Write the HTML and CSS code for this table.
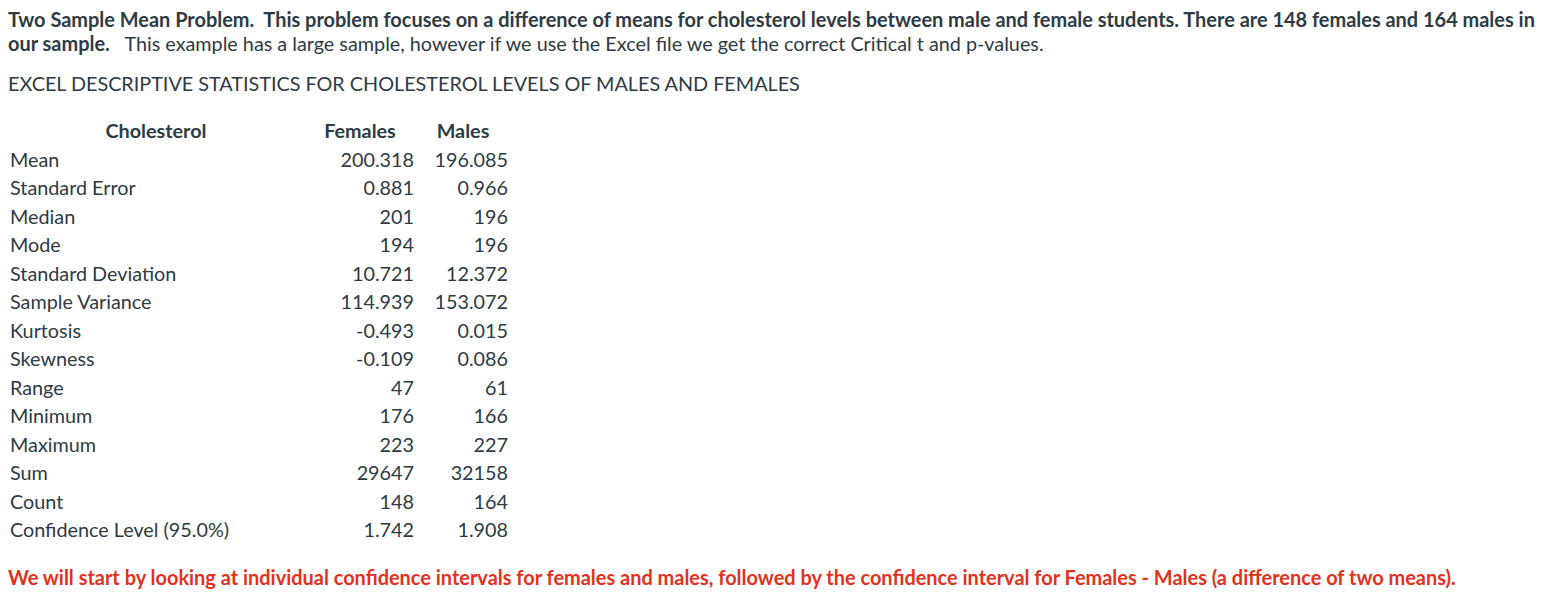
FILE: index.html
```html
<!DOCTYPE html>
<html>
<head>
<meta charset="utf-8">
<link rel="stylesheet" href="styles.css">
</head>
<body>
<p class="intro"><strong>Two Sample Mean Problem.&nbsp; This problem focuses on a difference of means for cholesterol levels between male and female students. There are 148 females and 164 males in our sample.</strong>&nbsp;&nbsp; This example has a large sample, however if we use the Excel file we get the correct Critical t and p-values.</p>
<p class="heading">EXCEL DESCRIPTIVE STATISTICS FOR CHOLESTEROL LEVELS OF MALES AND FEMALES</p>
<table class="stats">
<colgroup><col class="c-label"><col class="c-fem"><col class="c-male"></colgroup>
<thead>
<tr><th>Cholesterol</th><th>Females</th><th>Males</th></tr>
</thead>
<tbody>
<tr><td>Mean</td><td class="num">200.318</td><td class="num">196.085</td></tr>
<tr><td>Standard Error</td><td class="num">0.881</td><td class="num">0.966</td></tr>
<tr><td>Median</td><td class="num">201</td><td class="num">196</td></tr>
<tr><td>Mode</td><td class="num">194</td><td class="num">196</td></tr>
<tr><td>Standard Deviation</td><td class="num">10.721</td><td class="num">12.372</td></tr>
<tr><td>Sample Variance</td><td class="num">114.939</td><td class="num">153.072</td></tr>
<tr><td>Kurtosis</td><td class="num">-0.493</td><td class="num">0.015</td></tr>
<tr><td>Skewness</td><td class="num">-0.109</td><td class="num">0.086</td></tr>
<tr><td>Range</td><td class="num">47</td><td class="num">61</td></tr>
<tr><td>Minimum</td><td class="num">176</td><td class="num">166</td></tr>
<tr><td>Maximum</td><td class="num">223</td><td class="num">227</td></tr>
<tr><td>Sum</td><td class="num">29647</td><td class="num">32158</td></tr>
<tr><td>Count</td><td class="num">148</td><td class="num">164</td></tr>
<tr><td>Confidence Level (95.0%)</td><td class="num">1.742</td><td class="num">1.908</td></tr>
</tbody>
</table>
<p class="note"><strong>We will start by looking at individual confidence intervals for females and males, followed by the confidence interval for Females - Males (a difference of two means).</strong></p>
</body>
</html>
```

FILE: styles.css
```css
body {
  margin: 7px 8px 8px 8px;
  font-family: Lato, "Liberation Sans", sans-serif;
  font-size: 19.8px;
  line-height: 24px;
  color: #2d3b45;
  background: #fff;
}
p {
  margin: 0;
}
strong {
  font-size: 19.95px;
}
.intro {
  margin-bottom: 16px;
}
.heading {
  margin-bottom: 21px;
}
.stats {
  border-collapse: collapse;
  table-layout: fixed;
  width: 502px;
  margin-bottom: 21px;
}
.c-label { width: 296px; }
.c-fem { width: 112px; }
.c-male { width: 94px; }
.stats th, .stats td {
  padding: 2.25px 2px;
  line-height: 24px;
  white-space: nowrap;
}
.stats th {
  font-weight: bold;
  text-align: center;
}
.stats td {
  text-align: left;
}
.stats td.num {
  text-align: right;
}
.note {
  color: #e0321d;
}
```
